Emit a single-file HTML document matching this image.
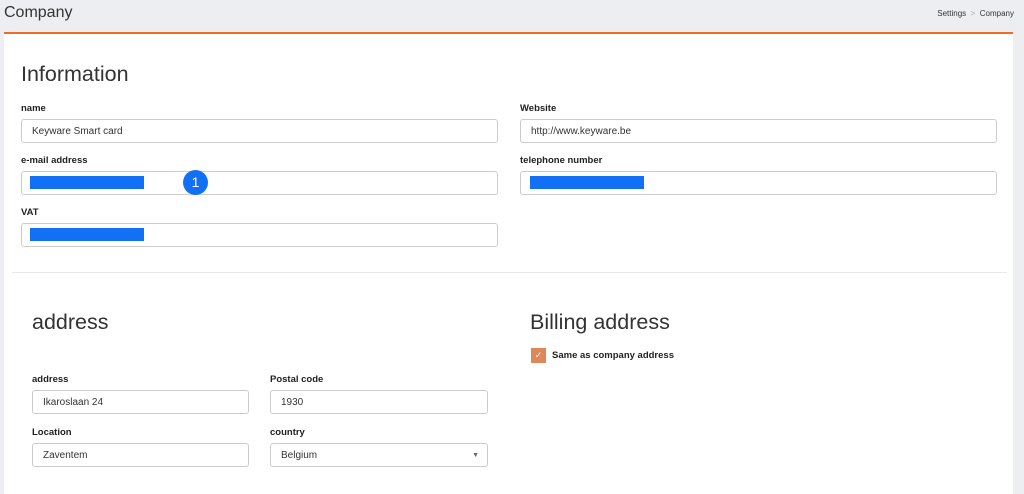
<!DOCTYPE html><html><head><style>
body{margin:0;width:1024px;height:481px;background:#eceef2;font-family:"Liberation Sans",sans-serif;color:#333;position:relative;overflow:hidden}
.a{position:absolute}
.panel{left:4px;top:32px;width:1009px;height:460px;background:#fff;border-top:2px solid #f26b21}
.lbl{font-size:9.5px;font-weight:bold;color:#222}
.in{border:1px solid #ccc;border-radius:3px;background:#fff;font-size:10px;line-height:23px;padding-left:10px;box-sizing:border-box;height:24px}
.bar{background:#1270f5;height:13px;width:114px}
</style></head><body>
<div class="a" style="left:4px;top:4px;font-size:16px;color:#333">Company</div>
<div class="a" style="right:10px;top:9px;font-size:8px;color:#333">Settings <span style="color:#aaa">&nbsp;&gt;&nbsp;</span> Company</div>
<div class="a panel"></div>
<div class="a" style="left:21px;top:62px;font-size:21.5px">Information</div>
<div class="a lbl" style="left:21px;top:103px">name</div>
<div class="a in" style="left:21px;top:119px;width:477px">Keyware Smart card</div>
<div class="a lbl" style="left:520px;top:103px">Website</div>
<div class="a in" style="left:520px;top:119px;width:477px">http://www.keyware.be</div>
<div class="a lbl" style="left:21px;top:155px">e-mail address</div>
<div class="a in" style="left:21px;top:171px;width:477px"></div>
<div class="a bar" style="left:30px;top:176px"></div>
<div class="a" style="left:183px;top:170px;width:25px;height:25px;border-radius:50%;background:#1270f5;color:#fff;font-size:14px;text-align:center;line-height:25px">1</div>
<div class="a lbl" style="left:520px;top:155px">telephone number</div>
<div class="a in" style="left:520px;top:171px;width:477px"></div>
<div class="a bar" style="left:530px;top:176px"></div>
<div class="a lbl" style="left:21px;top:207px">VAT</div>
<div class="a in" style="left:21px;top:223px;width:477px"></div>
<div class="a bar" style="left:30px;top:228px"></div>
<div class="a" style="left:12px;top:272px;width:995px;height:1px;background:#e8e8e8"></div>
<div class="a" style="left:32px;top:310px;font-size:21.5px">address</div>
<div class="a" style="left:530px;top:310px;font-size:21.5px">Billing address</div>
<div class="a" style="left:531px;top:348px;width:15px;height:15px;background:#e0875a;color:#fff;font-size:9px;text-align:center;line-height:15px">✓</div>
<div class="a lbl" style="left:552px;top:350px">Same as company address</div>
<div class="a lbl" style="left:32px;top:374px">address</div>
<div class="a in" style="left:32px;top:390px;width:217px">Ikaroslaan 24</div>
<div class="a lbl" style="left:270px;top:374px">Postal code</div>
<div class="a in" style="left:270px;top:390px;width:218px">1930</div>
<div class="a lbl" style="left:32px;top:427px">Location</div>
<div class="a in" style="left:32px;top:443px;width:217px">Zaventem</div>
<div class="a lbl" style="left:270px;top:427px">country</div>
<div class="a in" style="left:270px;top:443px;width:218px">Belgium<span style="position:absolute;right:8px;font-size:7px;color:#666">▼</span></div>
</body></html>
